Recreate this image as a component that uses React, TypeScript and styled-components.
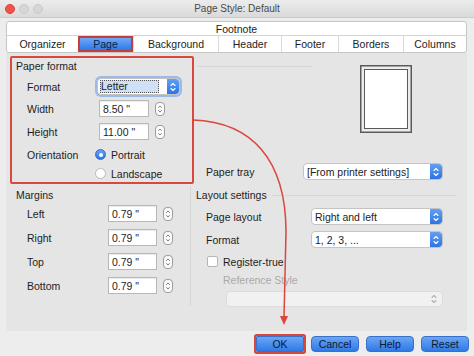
import React from 'react';
import styled, { createGlobalStyle } from 'styled-components';

const Global = createGlobalStyle`
  html, body { margin: 0; padding: 0; }
  body {
    width: 474px; height: 356px; overflow: hidden;
    background: #ededed;
    font-family: "Liberation Sans", Arial, sans-serif;
    font-size: 10.5px;
    color: #1d1d1d;
  }
`;

const Window = styled.div`
  position: relative;
  width: 474px;
  height: 356px;
  display: flex;
  flex-direction: column;
  background: #ededed;
`;

const TitleBar = styled.div`
  flex: none;
  height: 18px;
  box-sizing: border-box;
  display: grid;
  grid-template-columns: 1fr auto 1fr;
  align-items: center;
  background: linear-gradient(#ececec, #dadada);
  border-bottom: 1px solid #cbcbcb;
`;

const Lights = styled.div`
  display: flex;
  gap: 4px;
  padding-left: 5px;
`;

const Light = styled.span<{ $on?: boolean }>`
  width: 10px;
  height: 10px;
  border-radius: 50%;
  box-sizing: border-box;
  background: ${p => (p.$on ? '#f2544c' : '#d6d6d6')};
  border: 1px solid ${p => (p.$on ? '#d9403a' : '#cacaca')};
`;

const Title = styled.div`
  font-size: 10px;
  color: #4a4a4a;
`;

const TabBox = styled.div`
  margin: 3px 7px 0 6px;
  background: #fff;
  border: 1px solid #c6c6c6;
  border-radius: 3px;
`;

const FootnoteRow = styled.div`
  height: 13px;
  display: flex;
  align-items: center;
  justify-content: center;
  border-bottom: 1px solid #d6d6d6;
`;

const TabRow = styled.div`
  display: flex;
  height: 16px;
`;

const Tab = styled.div<{ $w?: number; $active?: boolean }>`
  ${p => (p.$w ? `width: ${p.$w}px; flex: none;` : 'flex: 1;')}
  box-sizing: border-box;
  display: flex;
  align-items: center;
  justify-content: center;
  border-left: 1px solid #dadada;
  &:first-child { border-left: none; }
  ${p =>
    p.$active &&
    `
    background: linear-gradient(#6ea8f6, #2f79ea);
    border: 2px solid #c2403c;
    color: #0c1f45;
  `}
`;

const Panel = styled.div`
  margin: 0 7px 0 6px;
  height: 278px;
  flex: none;
  box-sizing: border-box;
  padding: 3px 10px 0 4px;
  background: #e5e5e5;
  display: flex;
  flex-direction: column;
`;

const TopSection = styled.div`
  display: flex;
  height: 128px;
  flex: none;
`;

const PaperBox = styled.div`
  width: 184px;
  flex: none;
  box-sizing: border-box;
  border: 2px solid #d9473d;
  border-radius: 2px;
  padding: 1px 0 0 4px;
  display: flex;
  flex-direction: column;
`;

const SectionTitle = styled.div`
  height: 14px;
  line-height: 14px;
  white-space: nowrap;
`;

const Field = styled.div<{ $mt: number; $label: number; $indent: number }>`
  display: grid;
  grid-template-columns: ${p => p.$label}px auto;
  align-items: center;
  height: 17px;
  margin-top: ${p => p.$mt}px;
  padding-left: ${p => p.$indent}px;
  white-space: nowrap;
`;

const Label = styled.span<{ $muted?: boolean }>`
  color: ${p => (p.$muted ? '#a9a9a9' : '#1d1d1d')};
`;

const Control = styled.div<{ $shift?: number }>`
  display: flex;
  align-items: center;
  margin-left: ${p => p.$shift ?? 0}px;
`;

const SelectBox = styled.div<{ $w: number; $h?: number; $focus?: boolean; $disabled?: boolean }>`
  width: ${p => p.$w}px;
  height: ${p => p.$h ?? 17}px;
  box-sizing: border-box;
  display: flex;
  align-items: center;
  border-radius: 4px;
  background: ${p => (p.$disabled ? '#f1f1f1' : '#fff')};
  border: 1px solid ${p => (p.$disabled ? '#dcdcdc' : '#c4c4c4')};
  ${p => p.$focus && 'box-shadow: 0 0 0 2px rgba(96, 152, 232, 0.55);'}
  padding-left: 2px;
  overflow: hidden;
`;

const SelectText = styled.span<{ $focus?: boolean }>`
  flex: 1;
  padding-left: 1px;
  ${p =>
    p.$focus &&
    `
    background: #cfe0f7;
    outline: 1px dotted #555;
    outline-offset: -1px;
    height: 13px;
    line-height: 13px;
    margin-right: 8px;
  `}
`;

const ArrowBtn = styled.span`
  width: 12px;
  height: 100%;
  flex: none;
  display: flex;
  align-items: center;
  justify-content: center;
  background: linear-gradient(#62a0f3, #2c74e4);
  border-radius: 0 3px 3px 0;
`;

const GreyArrow = styled.span`
  width: 12px;
  flex: none;
  display: flex;
  justify-content: center;
  margin-right: 2px;
`;

const Input = styled.div<{ $w: number }>`
  width: ${p => p.$w}px;
  height: 17px;
  box-sizing: border-box;
  background: #fff;
  border: 1px solid #b8b8b8;
  box-shadow: inset 0 1px 1px rgba(0, 0, 0, 0.08);
  padding-left: 3px;
  display: flex;
  align-items: center;
`;

const Spinner = styled.span`
  width: 10px;
  height: 14px;
  box-sizing: border-box;
  margin-left: 6px;
  border: 1px solid #9c9c9c;
  border-radius: 4px;
  background: #fafafa;
  display: flex;
  align-items: center;
  justify-content: center;
`;

const Radio = styled.span<{ $on?: boolean }>`
  width: 11px;
  height: 11px;
  border-radius: 50%;
  box-sizing: border-box;
  display: flex;
  align-items: center;
  justify-content: center;
  background: ${p => (p.$on ? 'linear-gradient(#66a3f5, #2b74e6)' : '#fff')};
  border: 1px solid ${p => (p.$on ? '#2a6bd3' : '#b9b9b9')};
  margin-right: 5px;
  &::after {
    content: '';
    display: ${p => (p.$on ? 'block' : 'none')};
    width: 4px;
    height: 4px;
    border-radius: 50%;
    background: #fff;
  }
`;

const RightTop = styled.div`
  flex: 1;
  display: flex;
  flex-direction: column;
  padding-left: 3px;
`;

const PreviewRow = styled.div`
  display: flex;
  align-items: flex-start;
  padding-top: 9px;
`;

const HLine = styled.div<{ $w?: number }>`
  height: 1px;
  background: #d7d7d7;
  ${p => (p.$w ? `width: ${p.$w}px; flex: none;` : 'flex: 1;')}
  margin-top: 1px;
`;

const Preview = styled.svg`
  margin-left: 47px;
  flex: none;
`;

const TrayRow = styled.div`
  margin-top: auto;
  margin-bottom: 4px;
  padding-left: 9px;
  display: grid;
  grid-template-columns: 97px auto;
  align-items: center;
  height: 17px;
`;

const BottomSection = styled.div`
  flex: 1;
  display: flex;
`;

const MarginsCol = styled.div`
  width: 180px;
  flex: none;
  display: flex;
  flex-direction: column;
`;

const HeaderRow = styled.div<{ $indent: number }>`
  margin-top: 4px;
  padding-left: ${p => p.$indent}px;
  display: flex;
  align-items: center;
  height: 14px;
`;

const VDivider = styled.div`
  width: 1px;
  height: 120px;
  margin-top: 2px;
  background: #d5d5d5;
  flex: none;
`;

const LayoutCol = styled.div`
  flex: 1;
  padding-left: 5px;
  display: flex;
  flex-direction: column;
`;

const CheckRow = styled.div`
  margin-top: 5px;
  height: 17px;
  padding-left: 11px;
  display: flex;
  align-items: center;
  gap: 5px;
`;

const Checkbox = styled.span`
  width: 11px;
  height: 11px;
  box-sizing: border-box;
  background: #fff;
  border: 1px solid #b5b5b5;
  border-radius: 2px;
`;

const RefRow = styled.div`
  margin-top: 3px;
  height: 14px;
  line-height: 14px;
  padding-left: 27px;
`;

const DisabledRow = styled.div`
  margin-top: 4px;
  padding-left: 30px;
  display: flex;
`;

const Footer = styled.div`
  flex: 1;
  display: flex;
  justify-content: flex-end;
  align-items: flex-start;
  gap: 7px;
  padding: 5px 5px 0 0;
`;

const Button = styled.div<{ $marked?: boolean }>`
  width: 48px;
  height: 16px;
  box-sizing: border-box;
  display: flex;
  align-items: center;
  justify-content: center;
  border-radius: 4px;
  background: linear-gradient(#6aa6f5, #3079e6);
  border: 1px solid #3a70c8;
  color: #0d1a33;
  ${p => p.$marked && 'box-shadow: 0 0 0 2px #d8453b; border-radius: 1px;'}
`;

const Overlay = styled.svg`
  position: absolute;
  left: 0;
  top: 0;
  pointer-events: none;
`;

const Updown = ({ color }: { color: string }) => (
  <svg width="8" height="12" viewBox="0 0 8 12">
    <path d="M2 4.5 L4 2.5 L6 4.5 M2 7.5 L4 9.5 L6 7.5" stroke={color} strokeWidth="1.1" fill="none" strokeLinecap="round" strokeLinejoin="round" />
  </svg>
);

const SpinIcon = () => (
  <Spinner>
    <svg width="6" height="10" viewBox="0 0 6 10">
      <path d="M1.5 3.5 L3 2 L4.5 3.5 M1.5 6.5 L3 8 L4.5 6.5" stroke="#777" strokeWidth="0.9" fill="none" strokeLinecap="round" strokeLinejoin="round" />
    </svg>
  </Spinner>
);

const Select = ({ w, text, focus }: { w: number; text: string; focus?: boolean }) => (
  <SelectBox $w={w} $focus={focus}>
    <SelectText $focus={focus}>{text}</SelectText>
    <ArrowBtn>
      <Updown color="#fff" />
    </ArrowBtn>
  </SelectBox>
);

const margins = ['Left', 'Right', 'Top', 'Bottom'];
const tabs: { name: string; w?: number; active?: boolean }[] = [
  { name: 'Organizer', w: 71 },
  { name: 'Page', w: 55, active: true },
  { name: 'Background', w: 85 },
  { name: 'Header', w: 63 },
  { name: 'Footer', w: 57 },
  { name: 'Borders', w: 65 },
  { name: 'Columns' },
];

export default function App() {
  return (
    <Window>
      <Global />
      <TitleBar>
        <Lights>
          <Light $on />
          <Light />
          <Light />
        </Lights>
        <Title>Page Style: Default</Title>
        <span />
      </TitleBar>

      <TabBox>
        <FootnoteRow>Footnote</FootnoteRow>
        <TabRow>
          {tabs.map(t => (
            <Tab key={t.name} $w={t.w} $active={t.active}>
              {t.name}
            </Tab>
          ))}
        </TabRow>
      </TabBox>

      <Panel>
        <TopSection>
          <PaperBox>
            <SectionTitle>Paper format</SectionTitle>
            <Field $mt={5} $label={70} $indent={11}>
              <Label>Format</Label>
              <Control>
                <Select w={83} text="Letter" focus />
              </Control>
            </Field>
            <Field $mt={5} $label={70} $indent={11}>
              <Label>Width</Label>
              <Control $shift={2}>
                <Input $w={50}>8.50 "</Input>
                <SpinIcon />
              </Control>
            </Field>
            <Field $mt={6} $label={70} $indent={11}>
              <Label>Height</Label>
              <Control $shift={2}>
                <Input $w={50}>11.00 "</Input>
                <SpinIcon />
              </Control>
            </Field>
            <Field $mt={6} $label={70} $indent={11}>
              <Label>Orientation</Label>
              <Control $shift={-2}>
                <Radio $on />
                Portrait
              </Control>
            </Field>
            <Field $mt={2} $label={70} $indent={11}>
              <span />
              <Control $shift={-2}>
                <Radio />
                Landscape
              </Control>
            </Field>
          </PaperBox>

          <RightTop>
            <PreviewRow>
              <HLine $w={116} />
              <Preview width="52" height="68" viewBox="0 0 52 68">
                <rect x="0.75" y="0.75" width="50.5" height="66.5" fill="#ececec" stroke="#5a5a5a" strokeWidth="1.5" />
                <rect x="4.5" y="4.5" width="43" height="59" fill="#fff" stroke="#5a5a5a" strokeWidth="1" />
              </Preview>
            </PreviewRow>
            <TrayRow>
              <Label>Paper tray</Label>
              <Select w={140} text="[From printer settings]" />
            </TrayRow>
          </RightTop>
        </TopSection>

        <BottomSection>
          <MarginsCol>
            <HeaderRow $indent={6}>Margins</HeaderRow>
            {margins.map((m, i) => (
              <Field key={m} $mt={i === 0 ? 3 : 7} $label={81} $indent={17}>
                <Label>{m}</Label>
                <Control>
                  <Input $w={49}>0.79 "</Input>
                  <SpinIcon />
                </Control>
              </Field>
            ))}
          </MarginsCol>
          <VDivider />
          <LayoutCol>
            <HeaderRow $indent={0}>
              Layout settings
              <HLine style={{ marginLeft: 5, marginTop: 0 }} />
            </HeaderRow>
            <Field $mt={6} $label={105} $indent={10}>
              <Label>Page layout</Label>
              <Select w={132} text="Right and left" />
            </Field>
            <Field $mt={6} $label={105} $indent={10}>
              <Label>Format</Label>
              <Select w={132} text="1, 2, 3, ..." />
            </Field>
            <CheckRow>
              <Checkbox />
              Register-true
            </CheckRow>
            <RefRow>
              <Label $muted>Reference Style</Label>
            </RefRow>
            <DisabledRow>
              <SelectBox $w={217} $h={16} $disabled>
                <SelectText />
                <GreyArrow>
                  <Updown color="#b0b0b0" />
                </GreyArrow>
              </SelectBox>
            </DisabledRow>
          </LayoutCol>
        </BottomSection>
      </Panel>

      <Footer>
        <Button $marked>OK</Button>
        <Button>Cancel</Button>
        <Button>Help</Button>
        <Button>Reset</Button>
      </Footer>

      <Overlay width="474" height="356" viewBox="0 0 474 356">
        <path d="M193 120 C 252 122, 286 160, 286 232 L 284 318" stroke="#d9473d" strokeWidth="1.5" fill="none" />
        <path d="M280 316 L288 316 L284 325 Z" fill="#d9473d" />
      </Overlay>
    </Window>
  );
}
